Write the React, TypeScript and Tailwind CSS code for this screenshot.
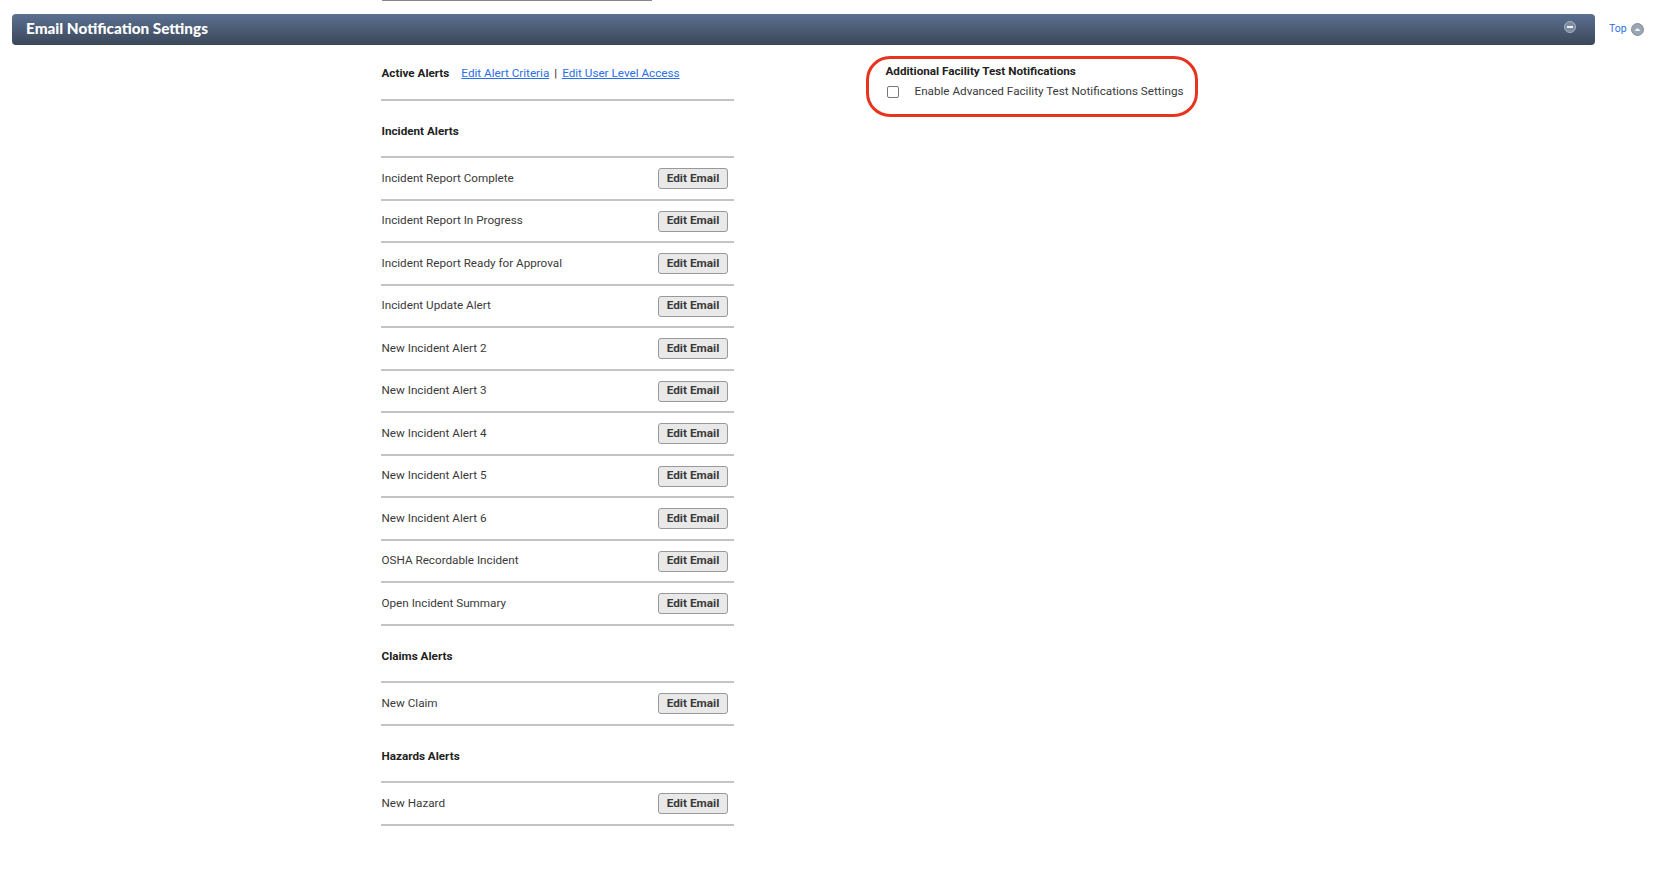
const sections = [
  {
    title: "Incident Alerts",
    alerts: [
      "Incident Report Complete",
      "Incident Report In Progress",
      "Incident Report Ready for Approval",
      "Incident Update Alert",
      "New Incident Alert 2",
      "New Incident Alert 3",
      "New Incident Alert 4",
      "New Incident Alert 5",
      "New Incident Alert 6",
      "OSHA Recordable Incident",
      "Open Incident Summary",
    ],
  },
  { title: "Claims Alerts", alerts: ["New Claim"] },
  { title: "Hazards Alerts", alerts: ["New Hazard"] },
];

const App = () => {
  return (
    <div className="min-h-screen bg-white font-['Roboto',sans-serif] text-[11.7px] text-[#3a3a3a]">
      <div className="ml-[382px] h-px w-[270px] bg-[#888]" />
      <div className="mt-[13px] flex items-start">
        <div className="ml-3 flex h-[31px] w-[1583px] items-center justify-between rounded-[4px] bg-gradient-to-b from-[#5b7192] to-[#3b4759] pl-[14px] pr-[19px]">
          <h1 className="mb-[2px] font-['Lato',sans-serif] text-[15.3px] font-black text-white">Email Notification Settings</h1>
          <svg viewBox="0 0 12 12" className="mb-[5px] h-3 w-3">
            <circle cx="6" cy="6" r="5.5" fill="#7d8ba0" stroke="#a9b2be" />
            <rect x="3" y="5" width="6" height="2" fill="#f2f2f2" />
          </svg>
        </div>
        <div className="ml-[14px] mt-[7px] flex items-center gap-[4px] text-[10.5px] text-[#2a6fe8]">
          <span>Top</span>
          <svg viewBox="0 0 13 13" className="mt-[2px] h-[13px] w-[13px]">
            <circle cx="6.5" cy="6.5" r="6" fill="#9aa5b3" stroke="#848f9d" />
            <path d="M3.5 8 L5.5 5.5 H7.5 L9.5 8 Z" fill="#f0f0f0" />
          </svg>
        </div>
      </div>

      <div className="flex items-start">
        <div className="ml-[381px] w-[353px]">
          <div className="flex h-[56px] items-center border-b-2 border-[#c4c4c4] pl-[0.5px] pt-[4px]">
            <span className="font-bold text-[#222]">Active Alerts</span>
            <a href="#" className="ml-3 mb-px text-[#2a6fe8] underline">Edit Alert Criteria</a>
            <span className="mx-[5px] text-[#222]">|</span>
            <a href="#" className="mb-px text-[#2a6fe8] underline">Edit User Level Access</a>
          </div>
          {sections.map((section) => (
            <div key={section.title}>
              <div className="flex h-[57.4px] items-center border-b-2 border-[#c4c4c4] pl-[0.5px] pt-[6px] font-bold text-[#222]">
                {section.title}
              </div>
              {section.alerts.map((alert) => (
                <div key={alert} className="flex h-[42.5px] items-center justify-between border-b-2 border-[#c4c4c4] pl-[0.5px] pr-[6px]">
                  <span>{alert}</span>
                  <button className="h-[21px] w-[70px] rounded-[3px] border border-[#999] bg-[#e9e9e9] text-[11.8px] font-bold text-[#3a3a3a]">
                    Edit Email
                  </button>
                </div>
              ))}
            </div>
          ))}
        </div>

        <div className="ml-[132px] mt-[11px] h-[61px] w-[332px] rounded-[24px] border-[3px] border-[#e8341f] pl-[16.5px] pt-[4px]">
          <div className="font-bold leading-[16px] text-[#222]">Additional Facility Test Notifications</div>
          <label className="mt-[4px] flex items-center">
            <input type="checkbox" className="ml-[1.5px] h-3 w-3 appearance-none rounded-[2px] border border-[#777] bg-white" />
            <span className="ml-[15.5px]">Enable Advanced Facility Test Notifications Settings</span>
          </label>
        </div>
      </div>
    </div>
  );
};

export default App;
